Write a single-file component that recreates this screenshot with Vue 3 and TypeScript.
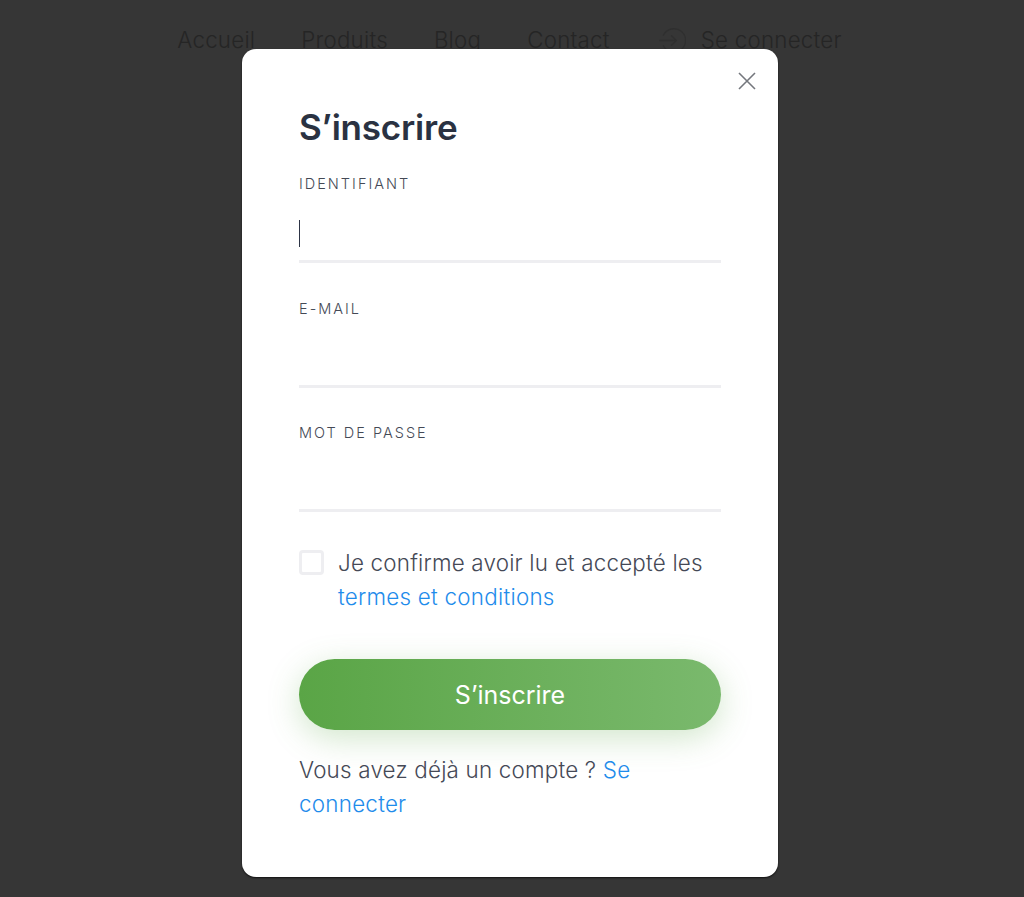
<script setup lang="ts">
const navItems: string[] = ['Accueil', 'Produits', 'Blog', 'Contact']
const fields = [
  { label: 'Identifiant', type: 'text', caret: true },
  { label: 'E-mail', type: 'email', caret: false },
  { label: 'Mot de passe', type: 'password', caret: false },
]
</script>

<template>
  <div class="page">
    <nav class="nav">
      <a v-for="item in navItems" :key="item" class="nav-link">{{ item }}</a>
      <a class="nav-link login">
        <svg class="login-icon" viewBox="0 0 28 28" fill="none" stroke="currentColor" stroke-width="1.4" stroke-linecap="round" stroke-linejoin="round">
          <path d="M4.5 8.5A12.2 12.2 0 1 1 4.5 19.5" />
          <path d="M1 14H18M13 9l5 5-5 5" />
        </svg>
        Se connecter
      </a>
    </nav>
    <div class="overlay">
      <section class="modal">
        <button class="close" aria-label="Fermer">
          <svg viewBox="0 0 18 18" fill="none" stroke="currentColor" stroke-width="1.6">
            <path d="M1 1L17 17M17 1L1 17" />
          </svg>
        </button>
        <h1 class="title">S’inscrire</h1>
        <div v-for="f in fields" :key="f.label" class="field">
          <label class="label">{{ f.label }}</label>
          <div class="input-wrap">
            <input class="input" :type="f.type" />
            <span v-if="f.caret" class="caret"></span>
          </div>
        </div>
        <label class="check">
          <span class="box"></span>
          <span>Je confirme avoir lu et accepté les <a class="link">termes et conditions</a></span>
        </label>
        <button class="submit">S’inscrire</button>
        <p class="foot">Vous avez déjà un compte ? <a class="link">Se connecter</a></p>
      </section>
    </div>
  </div>
</template>

<style>
html, body { margin: 0; background: #363636; }
</style>

<style scoped>
.page {
  position: relative;
  height: 897px;
  overflow: hidden;
  background: #363636;
  font-family: Inter, "Liberation Sans", sans-serif;
}
.nav {
  display: flex;
  align-items: center;
  justify-content: center;
  gap: 46px;
  padding: 25px 5px 0 0;
  font-size: 22.3px;
  font-weight: 300;
  letter-spacing: 0.25px;
  line-height: 30px;
  color: #252525;
}
.login { display: flex; align-items: center; gap: 15px; margin-left: 3px; }
.login-icon { width: 27px; height: 27px; color: #2f2f2f; }
.overlay {
  position: absolute;
  inset: 0;
  display: flex;
  justify-content: center;
  align-items: flex-start;
  padding-right: 4px;
}
.modal {
  position: relative;
  box-sizing: border-box;
  width: 536px;
  height: 828px;
  margin-top: 49px;
  padding: 54px 57px 0;
  background: #fff;
  border-radius: 14px;
  box-shadow: 0 1px 2px rgba(0, 0, 0, 0.7);
}
.close {
  position: absolute;
  top: 23px;
  right: 22px;
  width: 18px;
  height: 18px;
  padding: 0;
  border: 0;
  background: none;
  color: #74777d;
}
.close svg { display: block; width: 18px; height: 18px; }
.title {
  margin: 0 0 23px;
  font-size: 35px;
  line-height: 48px;
  font-weight: 600;
  color: #2a3242;
  letter-spacing: -0.2px;
}
.field { height: 124.7px; }
.label {
  display: block;
  font-size: 14.5px;
  font-weight: 300;
  line-height: 20px;
  letter-spacing: 2px;
  text-transform: uppercase;
  color: #444955;
}
.input-wrap { position: relative; }
.input {
  display: block;
  box-sizing: border-box;
  width: 100%;
  height: 69px;
  padding: 0;
  border: 0;
  border-bottom: 3px solid #eeeef1;
  outline: none;
  background: transparent;
  font: inherit;
}
.caret {
  position: absolute;
  left: 0;
  top: 26px;
  width: 1px;
  height: 27px;
  background: #2d3445;
}
.check {
  display: flex;
  gap: 14px;
  margin-top: -2px;
  font-size: 22.4px;
  font-weight: 300;
  letter-spacing: 0.2px;
  line-height: 34px;
  color: #454956;
}
.box {
  flex: none;
  box-sizing: border-box;
  width: 25px;
  height: 25px;
  margin-top: 4px;
  border: 3px solid #eeeef1;
  border-radius: 4px;
}
.link { color: #1f8ceb; font-weight: 300; letter-spacing: 0.25px; }
.submit {
  display: block;
  width: 100%;
  height: 71px;
  margin-top: 45px;
  border: 0;
  border-radius: 36px;
  background: linear-gradient(90deg, #5aa546, #7ab96d);
  box-shadow: 0 8px 32px rgba(90, 165, 70, 0.28);
  color: #fff;
  font: inherit;
  font-size: 25px;
  font-weight: 400;
}
.foot {
  margin: 23px 0 0;
  font-size: 22.4px;
  font-weight: 300;
  letter-spacing: 0.2px;
  line-height: 34px;
  color: #454956;
}
</style>
